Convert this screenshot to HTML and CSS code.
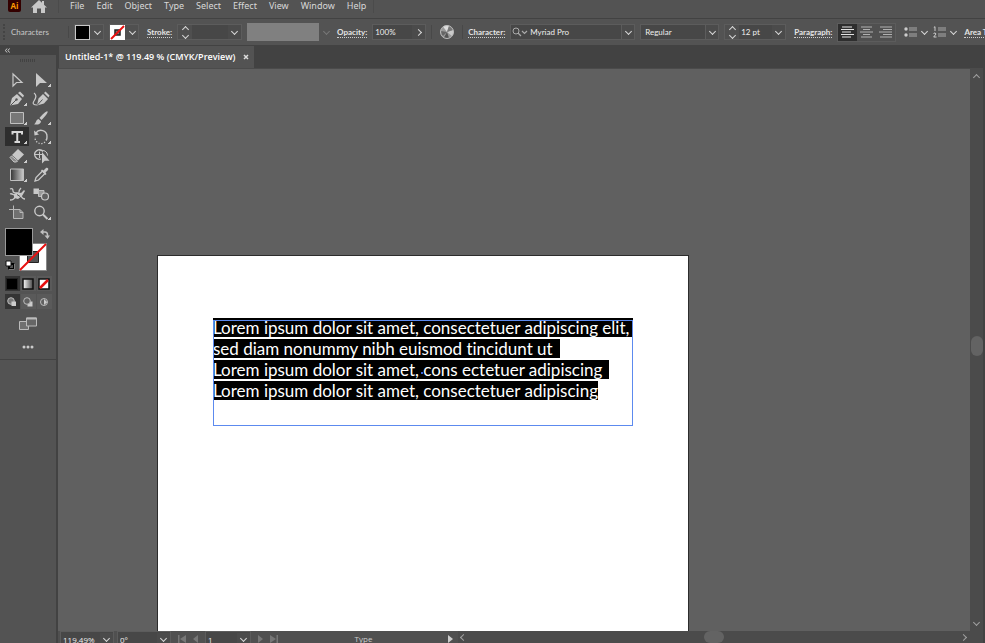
FILE: index.html
```html
<!DOCTYPE html>
<html lang="en">
<head>
    <meta charset="UTF-8">
    <meta name="viewport" content="width=device-width, initial-scale=1.0">
    <title>Untitled-1</title>
    <link rel="stylesheet" href="styles.css">
</head>
<body>
    <header class="menu-bar">
        <span class="logo">Ai</span>
        <button class="home" aria-label="Home">
            <svg width="16" height="14" viewBox="0 0 16 14"><path d="M8 0L0 7.5h2V13h4V8.5h4V13h4V7.5h2L13 4.7V1h-2v1.8z" fill="#c8c8c8"/></svg>
        </button>
        <nav class="menus">
            <button>File</button>
            <button>Edit</button>
            <button>Object</button>
            <button>Type</button>
            <button>Select</button>
            <button>Effect</button>
            <button>View</button>
            <button>Window</button>
            <button>Help</button>
        </nav>
    </header>

    <div class="control-bar">
        <span class="grip"></span>
        <span class="panel-name">Characters</span>
        <div class="group">
            <button class="swatch-drop" aria-label="Fill"><span class="swatch black"></span><i class="chev"></i></button>
            <button class="swatch-drop" aria-label="Stroke color">
                <svg width="15" height="15" viewBox="0 0 15 15"><path d="M0 0h15v15H0z" fill="#fff"/><path d="M5 5h5v5H5z" fill="#777" stroke="#222" stroke-width="1.5"/><path d="M1 14L14 1" stroke="#e81010" stroke-width="2"/></svg>
                <i class="chev"></i>
            </button>
        </div>
        <div class="group">
            <label class="link" for="stroke">Stroke:</label>
            <div class="field stroke-field">
                <button class="stepper" aria-label="Stroke weight step"><i class="chev up"></i><i class="chev"></i></button>
                <input id="stroke" type="text">
                <button class="arrow" aria-label="Stroke weights"><i class="chev"></i></button>
            </div>
            <button class="profile" aria-label="Variable width profile"><span></span><i class="chev"></i></button>
        </div>
        <div class="group">
            <label class="link" for="opacity">Opacity:</label>
            <div class="field opacity-field">
                <input id="opacity" type="text" value="100%">
                <button class="arrow" aria-label="Opacity slider"><i class="chev right"></i></button>
            </div>
        </div>
        <div class="group ruled">
            <button aria-label="Recolor">
                <svg width="14" height="14" viewBox="0 0 14 14"><circle cx="7" cy="7" r="6.5" fill="#999"/><path d="M7 7L3 1.5A7 7 0 0 1 9 .8z" fill="#ddd"/><path d="M7 7l6-2a6 6 0 0 1-1 6z" fill="#ccc"/><path d="M7 7l-6-1a6 6 0 0 0 2 5z" fill="#666"/><path d="M7 7l-3 5.6a6.5 6.5 0 0 0 5 .5z" fill="#555"/><path d="M7 7l2-6a6 6 0 0 1 4 4z" fill="#777"/><circle cx="7" cy="7" r="6.5" fill="none" stroke="#bbb"/></svg>
            </button>
        </div>
        <div class="group">
            <label class="link" for="font">Character:</label>
            <div class="field font-field">
                <svg class="search" width="16" height="10" viewBox="0 0 16 10"><circle cx="4" cy="4" r="3" fill="none" stroke="#aaa"/><path d="M6 6l3 3M10 4l2.5 2.5L15 4" fill="none" stroke="#aaa" stroke-width="1.2"/></svg>
                <input id="font" type="text" value="Myriad Pro">
                <button class="arrow ruled-arrow" aria-label="Fonts"><i class="chev"></i></button>
            </div>
            <div class="field style-field">
                <select aria-label="Font style"><option>Regular</option></select>
                <span class="arrow ruled-arrow"><i class="chev"></i></span>
            </div>
            <div class="field size-field">
                <button class="stepper" aria-label="Font size step"><i class="chev up"></i><i class="chev"></i></button>
                <input type="text" value="12 pt" aria-label="Font size">
                <button class="arrow" aria-label="Font sizes"><i class="chev"></i></button>
            </div>
        </div>
        <div class="group">
            <button class="link">Paragraph:</button>
            <div class="aligns">
                <button class="on" aria-label="Align left"><svg width="13" height="12" viewBox="0 0 13 12"><path d="M1 1h10M0 3.5h13M1 6h9M0 8.5h13M1 11h9"/></svg></button>
                <button aria-label="Align center"><svg width="13" height="12" viewBox="0 0 13 12"><path d="M1 1h11M3 3.5h7M0 6h13M3 8.5h7M1 11h11"/></svg></button>
                <button aria-label="Align right"><svg width="13" height="12" viewBox="0 0 13 12"><path d="M1 1h12M4 3.5h9M0 6h13M4 8.5h9M1 11h12"/></svg></button>
            </div>
        </div>
        <div class="group lists">
            <button class="list" aria-label="Bullets"><svg width="13" height="12" viewBox="0 0 13 12"><path d="M5 2h8M5 4h8M5 8h8M5 10h8" stroke="#aaa"/><circle cx="2" cy="3" r="1.7" fill="#ccc"/><circle cx="2" cy="9" r="1.7" fill="#ccc"/></svg><i class="chev"></i></button>
            <button class="list" aria-label="Numbering"><svg width="13" height="12" viewBox="0 0 13 12"><path d="M5 2h8M5 4h8M5 8h8M5 10h8" stroke="#aaa"/><path d="M.8 1.5L2 .7V5M.5 7.5Q2.5 6 3 8L.7 11H3.5" fill="none" stroke="#ccc"/></svg><i class="chev"></i></button>
        </div>
        <button class="link">Area Type</button>
    </div>

    <div class="main">
        <aside class="toolbar">
            <div class="toolbar-top">
                <svg width="5" height="5" viewBox="0 0 5 5"><path d="M2 .5l-1.5 2 1.5 2M4.5 .5L3 2.5l1.5 2" fill="none" stroke="#ccc"/></svg>
            </div>
            <span class="toolbar-grip"></span>
            <div class="tools">
                <button class="tool" aria-label="Selection"><svg width="18" height="18" viewBox="0 0 18 18"><path d="M5 3v12l3.5-3.5H14z" fill="none" stroke="#c8c8c8" stroke-width="1.2"/></svg></button>
                <button class="tool more" aria-label="Direct selection"><svg width="18" height="18" viewBox="0 0 18 18"><path d="M4 2v14l4-4h7z" fill="#c8c8c8"/></svg></button>
                <button class="tool more" aria-label="Pen"><svg width="18" height="18" viewBox="0 0 18 18"><path d="M2 15.5L4 8l5-4 5 5-4 5z" fill="#c8c8c8"/><path d="M10 3l2-1.5 4 4L15 7.5z" fill="#c8c8c8"/><path d="M2.5 15.5L8 10" stroke="#535353"/><circle cx="8.5" cy="9.5" r="1.2" fill="#535353"/></svg></button>
                <button class="tool" aria-label="Curvature"><svg width="18" height="18" viewBox="0 0 18 18"><path d="M5 15.5L6.5 8.5l4.5-4.5 5 5-4 4.5z" fill="#c8c8c8"/><path d="M12 3l1.5-1.5 4 4L16.500 7.5z" fill="#c8c8c8"/><path d="M5.500 15L10.500 9.500" stroke="#535353"/><path d="M2 3c3 2 2 5 0 8s0 4 3 4" fill="none" stroke="#c8c8c8" stroke-width="1.2"/></svg></button>
                <button class="tool more" aria-label="Rectangle"><svg width="18" height="18" viewBox="0 0 18 18"><path d="M2.500 3.500h13v11h-13z" fill="#777" stroke="#c0c0c0"/></svg></button>
                <button class="tool more" aria-label="Paintbrush"><svg width="18" height="18" viewBox="0 0 18 18"><path d="M15.500 2.500c1 1-3.500 6-6 8.500L7.500 9c2-2.500 7-7.500 8-6.500z" fill="#c8c8c8"/><path d="M6.500 10l2.500 2.200c0 3-4 4-7 3 2.500-1 1.500-4.500 4.500-5.200z" fill="#c8c8c8"/></svg></button>
                <button class="tool more on" aria-label="Type tool"><svg width="18" height="18" viewBox="0 0 18 18"><path d="M4.500 6.500V4H14v2.500M9.250 4v10M6.500 14H12" fill="none" stroke="#d8d8d8" stroke-width="2"/></svg></button>
                <button class="tool more" aria-label="Rotate"><svg width="18" height="18" viewBox="0 0 18 18"><path d="M4 5a6 6 0 0 1 11 3.500a6 6 0 0 1-1 4" fill="none" stroke="#c8c8c8" stroke-width="1.4"/><path d="M13 14a6 6 0 0 1-10-5" fill="none" stroke="#c8c8c8" stroke-width="1.3" stroke-dasharray="1.3 1.5"/><path d="M2 2.500l.5 5 4.500-1z" fill="#c8c8c8"/></svg></button>
                <button class="tool more" aria-label="Eraser"><svg width="18" height="18" viewBox="0 0 18 18"><path d="M10 2l6 5.500-6 6L4 8z" fill="#c8c8c8"/><path d="M3.500 9L2 10.500l4 4.500h2.500L9.500 14z" fill="#8a8a8a" stroke="#c8c8c8"/></svg></button>
                <button class="tool" aria-label="Shape builder"><svg width="18" height="18" viewBox="0 0 18 18"><path d="M11 4.500A4.700 4.700 0 1 0 9 12" fill="none" stroke="#c8c8c8" stroke-width="1.3"/><path d="M7 4c5-2 8.500 1 8.500 4.500M3 7.500h8M7.500 5v6" fill="none" stroke="#c8c8c8"/><path d="M10 5v11.500l2.800-2.800H17.500z" fill="#c8c8c8"/></svg></button>
                <button class="tool more" aria-label="Gradient"><svg width="18" height="18" viewBox="0 0 18 18"><defs><linearGradient id="grad"><stop stop-color="#333"/><stop offset="1" stop-color="#ccc"/></linearGradient></defs><path d="M2.500 3h13v11.500h-13z" fill="url(#grad)" stroke="#c0c0c0"/></svg></button>
                <button class="tool" aria-label="Eyedropper"><svg width="18" height="18" viewBox="0 0 18 18"><path d="M3 15l1-3.500L10.500 5 13 7.500 6.500 14z" fill="none" stroke="#c8c8c8" stroke-width="1.3"/><path d="M9 4.500l1-1 1.500 1L14 2c1.500-1 3 .5 2 2l-2.500 2.500 1 1.500-1 1z" fill="#c8c8c8"/></svg></button>
                <button class="tool" aria-label="Symbol sprayer"><svg width="18" height="18" viewBox="0 0 18 18"><path d="M2 4c2-1 3 0 3 2s2 2 4 2M2 9c2-1 3 1 5 1M11 7c0-2 1-3 2-4" fill="none" stroke="#c8c8c8" stroke-width="1.3"/><path d="M6 9l4-2 3 1 3-3 1 1-3 5-4 3-4-1z" fill="#c8c8c8"/><path d="M7 12c-1 3-3 3-5 3M13 11c1 2 2 3 4 3" fill="none" stroke="#c8c8c8" stroke-width="1.3"/><path d="M9 9.500l3 2" stroke="#535353"/></svg></button>
                <button class="tool" aria-label="Blend"><svg width="18" height="18" viewBox="0 0 18 18"><path d="M1.500 3.500H7V9H1.500z" fill="#c8c8c8"/><path d="M6.500 5.500h5.500v6H6.500z" fill="#999" stroke="#c0c0c0"/><circle cx="13" cy="11.500" r="3.500" fill="#606060" stroke="#c8c8c8" stroke-width="1.2"/></svg></button>
                <button class="tool" aria-label="Artboard"><svg width="18" height="18" viewBox="0 0 18 18"><path d="M5.500 5.500v9H15v-6l-3-3z" fill="#707070" stroke="#b8b8b8"/><path d="M1 5.500h5M5.500 1.500v5" stroke="#b8b8b8"/><path d="M12 5.500v3h3" fill="none" stroke="#b8b8b8"/></svg></button>
                <button class="tool more" aria-label="Zoom"><svg width="18" height="18" viewBox="0 0 18 18"><circle cx="7.500" cy="7" r="4.700" fill="none" stroke="#c8c8c8" stroke-width="1.4"/><path d="M11 10.500l4.500 4.500" stroke="#c8c8c8" stroke-width="2"/></svg></button>
            </div>
            <div class="paint">
                <button class="paint-stroke" aria-label="Stroke"><svg width="28" height="28" viewBox="0 0 28 28"><path d="M.5.5h27v27H.5z" fill="#fff" stroke="#888"/><path d="M8.500 8.500h11v11h-11z" fill="#535353" stroke="#222"/><path d="M1 27L27 1" stroke="#e81010" stroke-width="2"/></svg></button>
                <button class="paint-fill" aria-label="Fill"></button>
                <button class="paint-swap" aria-label="Swap fill and stroke"><svg width="10" height="10" viewBox="0 0 10 10"><path d="M2 3h3q2.500 0 2.500 3v1" fill="none" stroke="#c0c0c0" stroke-width="1.5"/><path d="M3.500 0v6L0 3zM4.500 6.500h5.500L7.500 10z" fill="#c0c0c0"/></svg></button>
                <button class="paint-reset" aria-label="Default fill and stroke"><svg width="10" height="10" viewBox="0 0 10 10"><path d="M4 4h5v5H4z" fill="none" stroke="#000" stroke-width="2"/><path d="M1 1h5v5H1z" fill="#fff" stroke="#111"/><path d="M9.500 3.500v6h-6" fill="none" stroke="#ccc" stroke-width=".6"/></svg></button>
            </div>
            <div class="modes">
                <button class="on" aria-label="Color"><svg width="12" height="12" viewBox="0 0 12 12"><path d="M.5.500h11v11H.5z" stroke="#222"/></svg></button>
                <button aria-label="Gradient fill"><svg width="12" height="12" viewBox="0 0 12 12"><defs><linearGradient id="grad2"><stop stop-color="#fff"/><stop offset="1" stop-color="#444"/></linearGradient></defs><path d="M1 1h10v10H1z" fill="url(#grad2)" stroke="#111" stroke-width="1.5"/></svg></button>
                <button aria-label="None"><svg width="12" height="12" viewBox="0 0 12 12"><path d="M1 1h10v10H1z" fill="#fff" stroke="#111" stroke-width="1.5"/><path d="M2 10L10 2" stroke="#e81010" stroke-width="2.5"/></svg></button>
            </div>
            <div class="modes">
                <button class="on" aria-label="Draw normal"><svg width="12" height="12" viewBox="0 0 12 12"><circle cx="5" cy="5" r="3.3" fill="#777" stroke="#bbb"/><path d="M5.500 5.500H10V10H5.500z" fill="#ccc"/></svg></button>
                <button aria-label="Draw behind"><svg width="12" height="12" viewBox="0 0 12 12"><path d="M5.500 5.500H10.500V10.500H5.500z" fill="#ccc"/><circle cx="5" cy="5" r="3.3" fill="#606060" stroke="#bbb"/></svg></button>
                <button aria-label="Draw inside"><svg width="12" height="12" viewBox="0 0 12 12"><circle cx="6" cy="6" r="3.5" fill="#606060" stroke="#bbb"/><path d="M6 6h3.500L6 9z" fill="#ccc"/><path d="M6 6V3l3 3z" fill="#ccc"/></svg></button>
            </div>
            <button class="wide" aria-label="Screen mode"><svg width="18" height="13" viewBox="0 0 18 13"><path d="M.5 4.500h9v8h-9z" fill="#707070" stroke="#bbb"/><path d="M7.500 1h10v8h-10z" fill="#666" stroke="#bbb"/><path d="M7.500 1.500h10" stroke="#bbb" stroke-width="2"/></svg></button>
            <button class="wide" aria-label="Edit toolbar"><svg width="12" height="4" viewBox="0 0 12 4"><circle cx="2" cy="2" r="1.5" fill="#ccc"/><circle cx="6" cy="2" r="1.5" fill="#ccc"/><circle cx="10" cy="2" r="1.5" fill="#ccc"/></svg></button>
        </aside>

        <section class="document">
            <div class="tabs">
                <div class="tab">
                    <span>Untitled-1* @ 119.49 % (CMYK/Preview)</span>
                    <button aria-label="Close"><svg width="6" height="6" viewBox="0 0 6 6"><path d="M1 1l4 4M5 1L1 5" stroke="#ddd" stroke-width="1.5"/></svg></button>
                </div>
            </div>
            <div class="work">
                <div class="canvas">
                    <div class="artboard">
                        <div class="text-frame">
                            <p class="line full">Lorem ipsum dolor sit amet, consectetuer adipiscing elit,</p>
                            <p class="line space">sed diam nonummy nibh euismod tincidunt ut</p>
                            <p class="line space">Lorem ipsum dolor sit amet, cons ectetuer adipiscing</p>
                            <p class="line">Lorem ipsum dolor sit amet, consectetuer adipiscing</p>
                            <span class="center-point"></span>
                        </div>
                    </div>
                </div>
                <div class="v-scroll">
                    <i class="chev up"></i>
                    <span class="thumb"></span>
                    <i class="chev"></i>
                </div>
            </div>
            <footer class="status-bar">
                <div class="field zoom-field">
                    <input type="text" value="119.49%" aria-label="Zoom">
                    <button class="arrow" aria-label="Zoom levels"><i class="chev"></i></button>
                </div>
                <div class="field turn-field">
                    <input type="text" value="0°" aria-label="Rotate view">
                    <button class="arrow" aria-label="Angles"><i class="chev"></i></button>
                </div>
                <div class="pager">
                    <button aria-label="First"><svg width="8" height="8" viewBox="0 0 8 8"><path d="M0 0h1.500v8H0zM8 0v8L2 4z" fill="#777"/></svg></button>
                    <button aria-label="Previous"><svg width="5" height="8" viewBox="0 0 5 8"><path d="M5 0v8L0 4z" fill="#777"/></svg></button>
                </div>
                <div class="field page-field">
                    <input type="text" value="1" aria-label="Artboard number">
                    <button class="arrow" aria-label="Artboards"><i class="chev"></i></button>
                </div>
                <div class="pager">
                    <button aria-label="Next"><svg width="5" height="8" viewBox="0 0 5 8"><path d="M0 0v8l5-4z" fill="#777"/></svg></button>
                    <button aria-label="Last"><svg width="8" height="8" viewBox="0 0 8 8"><path d="M6.500 0H8v8H6.500zM0 0v8l6-4z" fill="#777"/></svg></button>
                </div>
                <button class="status-name">Type</button>
                <button class="play" aria-label="Status options"><svg width="5" height="8" viewBox="0 0 5 8"><path d="M0 0v8l5-4z" fill="#ccc"/></svg></button>
                <div class="h-scroll">
                    <i class="chev left"></i>
                    <span class="thumb"></span>
                    <i class="chev right"></i>
                </div>
            </footer>
        </section>
    </div>
</body>
</html>
```

FILE: styles.css
```css
* {
    box-sizing: border-box;
}
body {
    display: flex;
    flex-direction: column;
    height: 100vh;
    margin: 0;
    overflow: hidden;
    background: #535353;
    color: #d8d8d8;
    font-family: "Open Sans", "Noto Sans", sans-serif;
    font-size: 8px;
    line-height: 12px;
}
button, input, select {
    margin: 0;
    padding: 0;
    border: 0;
    background: none;
    color: inherit;
    font: inherit;
    appearance: none;
}
button {
    display: flex;
    align-items: center;
    justify-content: center;
    flex: none;
}
svg {
    display: block;
    flex: none;
}

/* small arrows used all over the interface */
.chev {
    display: block;
    flex: none;
    width: 5px;
    height: 5px;
    border: solid #d8d8d8;
    border-width: 0 1px 1px 0;
    transform: translateY(-1px) rotate(45deg);
}
.chev.up { transform: translateY(1px) rotate(225deg); }
.chev.right { transform: rotate(-45deg); }
.chev.left { transform: rotate(135deg); }

/* menu bar */
.menu-bar {
    display: flex;
    align-items: flex-start;
    flex: none;
    height: 19px;
    padding-left: 8px;
    border-bottom: 1px solid #424242;
}
.logo {
    width: 13px;
    height: 12px;
    border-radius: 0 0 2px 2px;
    background: #330000;
    color: #ff9a00;
    font-weight: bold;
    text-align: center;
}
.home {
    margin-left: 10px;
}
.menus {
    display: flex;
    gap: 12px;
    height: 13px;
    margin-left: 11px;
    padding: 0 7px 0 11px;
    border: solid #4b4b4b;
    border-width: 0 1px;
    font-family: "Noto Sans", sans-serif;
    font-size: 9px;
    line-height: 11px;
}
.menus button { height: 11px; }

/* control bar */
.control-bar {
    display: flex;
    align-items: center;
    flex: none;
    gap: 8px;
    height: 27px;
    padding-left: 3px;
    border-bottom: 1px solid #424242;
    font-family: Lato, "Open Sans", sans-serif;
    white-space: nowrap;
    overflow: hidden;
}
.grip {
    flex: none;
    width: 2px;
    height: 16px;
    margin-right: -2px;
    border-left: 2px dotted #444;
}
.panel-name {
    flex: none;
    width: 58px;
    border-right: 1px solid #484848;
    margin-right: -3px;
    color: #c8c8c8;
}
.group {
    display: flex;
    align-items: center;
    flex: none;
    gap: 5px;
}
.ruled {
    padding: 0 8px;
    margin: 0 -3px;
    border: solid #484848;
    border-width: 0 1px;
}
.link {
    flex: none;
    border-bottom: 1px dotted #ccc;
    color: #e4e4e4;
    font-weight: bold;
    line-height: 10px;
}
.field, .swatch-drop {
    display: flex;
    align-items: center;
    flex: none;
    height: 16px;
    border: 1px solid #5c5c5c;
    background: #474747;
}
.field input, .field select {
    flex: 1;
    min-width: 0;
    height: 14px;
    padding-left: 2px;
    color: #eee;
}
.swatch-drop {
    width: 30px;
    justify-content: flex-start;
    gap: 5px;
    background: #505050;
}
.swatch {
    width: 15px;
    height: 15px;
    border: 1px solid #c8c8c8;
}
.black { background: #000; }
.arrow {
    display: flex;
    align-items: center;
    justify-content: center;
    flex: none;
    width: 13px;
    height: 14px;
    background: #4b4b4b;
}
.ruled-arrow { border-left: 1px solid #5c5c5c; }
.stepper {
    flex-direction: column;
    gap: 3px;
    width: 14px;
    height: 14px;
    background: #4f4f4f;
}
.stroke-field { width: 65px; }
.opacity-field { width: 54px; }
.font-field { width: 125px; }
.style-field { width: 79px; }
.style-field select { padding-left: 4px; }
.style-field .arrow { pointer-events: none; }
.size-field { width: 62px; }
.search { margin-left: 1px; }
.profile {
    gap: 5px;
}
.profile span {
    width: 72px;
    height: 18px;
    background: #808080;
}
.profile .chev { border-color: #777; }
.aligns {
    display: flex;
    border: 1px solid #5c5c5c;
}
.aligns button {
    width: 19px;
    height: 17px;
    background: #505050;
}
.aligns .on { background: #2e2e2e; }
.aligns path { stroke: #b0b0b0; }
.aligns .on path { stroke: #e4e4e4; }
.lists { gap: 6px; }
.list { gap: 5px; }

/* tool panel */
.main {
    display: flex;
    flex: 1;
    min-height: 0;
}
.toolbar {
    display: flex;
    flex-direction: column;
    align-items: center;
    align-self: flex-start;
    flex: none;
    width: 56px;
    padding-bottom: 1px;
    border-bottom: 1px solid #424242;
}
.toolbar-top {
    align-self: stretch;
    height: 9px;
    padding: 2px 5px;
    background: #424242;
}
.toolbar-grip {
    width: 16px;
    height: 3px;
    margin: 4px 0 8px;
    background: repeating-linear-gradient(90deg, #424242 0 1px, transparent 1px 2px);
}
.tools {
    display: grid;
    grid-template-columns: 24px 24px;
    grid-auto-rows: 19px;
    padding-left: 1px;
}
.tool {
    position: relative;
}
.tool.more::after {
    content: "";
    position: absolute;
    right: 2px;
    bottom: 2px;
    width: 3px;
    height: 3px;
    background: linear-gradient(135deg, transparent 45%, #ccc 45%);
}
.tool.on { background: #2e2e2e; }
.paint {
    position: relative;
    width: 46px;
    height: 44px;
    margin: 6px 0 4px;
}
.paint button { position: absolute; }
.paint-fill {
    left: 0;
    top: 0;
    width: 28px;
    height: 28px;
    border: 1px solid #999;
    background: #000;
}
.paint-stroke { left: 14px; top: 15px; }
.paint-swap { left: 35px; top: 1px; }
.paint-reset { left: 0; top: 32px; }
.modes {
    display: flex;
    gap: 1px;
    margin-bottom: 3px;
}
.modes button {
    width: 15px;
    height: 15px;
    background: #5a5a5a;
}
.modes .on { background: #343434; }
.wide {
    width: 48px;
    height: 23px;
}

/* document */
.document {
    display: flex;
    flex: 1;
    flex-direction: column;
    min-width: 0;
    border: solid #424242;
    border-width: 0 2px;
}
.tabs {
    display: flex;
    flex: none;
    height: 23px;
    padding-left: 1px;
    border-bottom: 1px solid #4b4b4b;
    background: #424242;
}
.tab {
    display: flex;
    align-items: center;
    gap: 8px;
    padding: 0 5px 0 6px;
    background: #535353;
    color: #fff;
    font-size: 9px;
    font-weight: 600;
}
.work {
    display: flex;
    flex: 1;
    min-height: 0;
}
.canvas {
    display: flex;
    flex: 1;
    min-width: 0;
    padding: 186px 0 0 99px;
    background: #606060;
    overflow: hidden;
}
.artboard {
    position: relative;
    flex: none;
    width: 532px;
    border: solid #2c2c2c;
    border-width: 1px 1px 0;
    background: #fff;
}
.text-frame {
    position: absolute;
    left: 55px;
    top: 62px;
    width: 420px;
    height: 108px;
    color: #fff;
    font-family: Lato, "Open Sans", sans-serif;
    font-size: 17px;
    font-variant-ligatures: none;
    line-height: 19px;
}
.text-frame::after {
    content: "";
    position: absolute;
    inset: 2px 0 0;
    border: 1px solid #5c8aef;
}
.line {
    width: fit-content;
    margin: 0 0 2px;
    background: #000;
    white-space: nowrap;
}
.full { width: 100%; }
.space { padding-right: 7px; }
.center-point {
    position: absolute;
    left: 208px;
    top: 54px;
    width: 2px;
    height: 2px;
    background: #3b62d8;
}
.v-scroll {
    display: flex;
    flex-direction: column;
    align-items: center;
    justify-content: space-between;
    flex: none;
    width: 13px;
    padding: 5px 0;
    background: #4b4b4b;
}
.thumb {
    flex: none;
    border-radius: 6px;
    background: #636363;
}
.v-scroll .thumb {
    width: 12px;
    height: 20px;
    margin-bottom: 8px;
}
.v-scroll .chev, .h-scroll .chev { border-color: #a0a0a0; }

/* status bar */
.status-bar {
    display: flex;
    flex: none;
    height: 12px;
    padding-left: 2px;
    background: #505050;
    overflow: hidden;
}
.status-bar .field {
    border-width: 1px 1px 0;
}
.zoom-field { width: 54px; }
.turn-field { width: 54px; margin-left: 3px; }
.page-field { width: 46px; }
.pager {
    display: flex;
    align-items: flex-start;
    justify-content: center;
    gap: 7px;
    width: 34px;
    padding-top: 4px;
}
.status-name {
    flex: none;
    width: 157px;
    height: 16px;
    color: #ccc;
}
.play {
    width: 16px;
    height: 16px;
}
.h-scroll {
    display: flex;
    align-items: center;
    justify-content: space-between;
    flex: 1;
    padding: 0 17px 0 3px;
    background: #4b4b4b;
}
.h-scroll .thumb {
    width: 20px;
    height: 12px;
}
```
